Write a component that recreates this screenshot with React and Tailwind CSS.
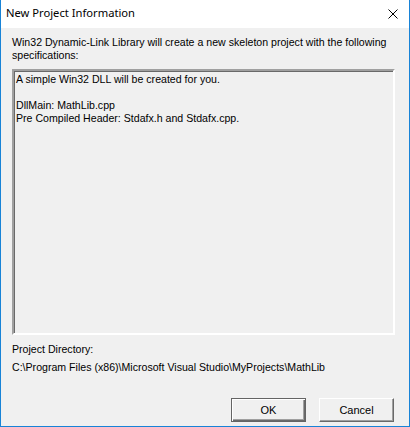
import React from "react";

const sans = "font-['Liberation_Sans',Arial,sans-serif]";

function CloseGlyph() {
  return (
    <svg width="10" height="10" viewBox="0 0 10 10" className="block">
      <path d="M0.5 0.5 L9.5 9.5 M9.5 0.5 L0.5 9.5" stroke="#000" strokeWidth="1" fill="none" />
    </svg>
  );
}

function DlgButton({ label, primary }) {
  const frame = primary
    ? "border border-[#646464] shadow-[inset_1px_1px_0_#fff,inset_-1px_-1px_0_#696969,inset_-2px_-2px_0_#a0a0a0]"
    : "border border-t-white border-l-white border-r-[#696969] border-b-[#696969] shadow-[inset_-1px_-1px_0_#a0a0a0]";
  return (
    <button className={`w-[75px] h-[24px] bg-[#f0f0f0] text-[11px] text-black ${sans} ${frame}`}>
      {label}
    </button>
  );
}

export default function App() {
  return (
    <div className="w-[410px] h-[427px] flex flex-col bg-[#f0f0f0] border-x border-b border-[#1883d7]">
      <div className="h-[28px] shrink-0 bg-white flex items-center justify-between pl-[5px] pr-[11px]">
        <span className="text-[11.2px] text-black font-['Noto_Sans',sans-serif] pb-[2px]">New Project Information</span>
        <CloseGlyph />
      </div>

      <div className={`flex-1 flex flex-col px-[11px] text-[10.6px] leading-[13px] text-black ${sans}`}>
        <p className="mt-[8px]">
          Win32 Dynamic-Link Library will create a new skeleton project with the following specifications:
        </p>
        <div className="mt-[7px] h-[266px] w-[383px] border-2 border-t-[#a0a0a0] border-l-[#a0a0a0] border-r-white border-b-white shadow-[inset_1px_1px_0_#696969] pl-[2px] pt-[2px]">
          <p>A simple Win32 DLL will be created for you.</p>
          <p>&nbsp;</p>
          <p>DllMain: MathLib.cpp</p>
          <p>Pre Compiled Header: Stdafx.h and Stdafx.cpp.</p>
        </div>
        <p className="mt-[8px]">Project Directory:</p>
        <p className="mt-[5px]">C:\Program Files (x86)\Microsoft Visual Studio\MyProjects\MathLib</p>
        <div className="mt-auto mb-[4px] flex justify-end gap-[13px] pr-[4px]">
          <DlgButton label="OK" primary />
          <DlgButton label="Cancel" />
        </div>
      </div>
    </div>
  );
}
